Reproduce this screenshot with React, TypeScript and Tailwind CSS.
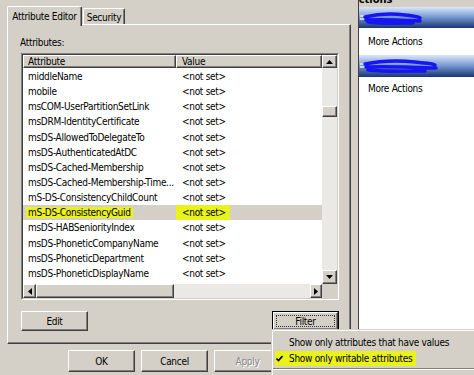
import React from "react";

const font = "font-['DejaVu_Sans_Condensed','Liberation_Sans',sans-serif]";
const raised =
  "border border-t-white border-l-white border-r-[#404040] border-b-[#404040] shadow-[inset_-1px_-1px_0_#808080] bg-[#d4d0c8]";

const rows = [
  "middleName",
  "mobile",
  "msCOM-UserPartitionSetLink",
  "msDRM-IdentityCertificate",
  "msDS-AllowedToDelegateTo",
  "msDS-AuthenticatedAtDC",
  "msDS-Cached-Membership",
  "msDS-Cached-Membership-Time...",
  "mS-DS-ConsistencyChildCount",
  "mS-DS-ConsistencyGuid",
  "msDS-HABSeniorityIndex",
  "msDS-PhoneticCompanyName",
  "msDS-PhoneticDepartment",
  "msDS-PhoneticDisplayName",
  "msDS-PhoneticFirstName",
];

function Arrow({ dir }: { dir: "up" | "down" | "left" | "right" }) {
  const vertical = dir === "up" || dir === "down";
  const points = {
    up: "3.5,0 7,4 0,4",
    down: "0,0 7,0 3.5,4",
    left: "0,3.5 4,0 4,7",
    right: "0,0 4,3.5 0,7",
  }[dir];
  return (
    <svg width={vertical ? 7 : 4} height={vertical ? 4 : 7} viewBox={vertical ? "0 0 7 4" : "0 0 4 7"}>
      <polygon points={points} fill="#000" />
    </svg>
  );
}

function ScrollButton({ dir, className }: { dir: "up" | "down" | "left" | "right"; className: string }) {
  return (
    <div className={`${raised} ${className} flex shrink-0 items-center justify-center`}>
      <Arrow dir={dir} />
    </div>
  );
}

function Scribble({ d }: { d: string }) {
  return (
    <svg className="absolute inset-0" width="115" height="22" viewBox="0 0 115 22">
      <path d="M1,9 H7 M1,12 H7" stroke="#e8eef8" strokeWidth="1.4" />
      <path d={d} stroke="#1616f2" strokeWidth="3.5" strokeLinecap="round" fill="none" />
    </svg>
  );
}

function PanelHeader({ h, d }: { h: string; d: string }) {
  return (
    <div className={`relative ${h} bg-gradient-to-b from-[#dce8f8] via-[#7396d0] to-[#1b3572]`}>
      <Scribble d={d} />
    </div>
  );
}

function DialogButton({ label, disabled }: { label: string; disabled?: boolean }) {
  return (
    <div className={`${raised} flex h-[22px] w-[67px] items-center justify-center`}>
      <span className={disabled ? "text-[#8a8884] [text-shadow:1px_1px_0_#fff]" : "text-black"}>{label}</span>
    </div>
  );
}

export default function App() {
  return (
    <div
      className={`${font} relative flex h-[375px] w-[474px] overflow-hidden whitespace-nowrap bg-[#d4d0c8] text-[10px] leading-[11px] tracking-[-0.3px] text-black`}
    >
      {/* dialog */}
      <div className="relative z-10 flex h-full w-[359px] shrink-0 flex-col border-r border-[#404040] bg-[#d4d0c8] pl-[7px] pt-[6px]">
        {/* tabs */}
        <div className="flex h-[18px] items-end gap-[1px]">
          <div className="relative z-10 -mb-[2px] h-[20px] w-[75px] rounded-t-[2px] border-l border-t border-r border-l-white border-t-white border-r-[#404040] bg-[#d4d0c8] pt-[4px] text-center shadow-[inset_-1px_0_0_#808080]">
            Attribute Editor
          </div>
          <div className="h-[16px] w-[42px] rounded-t-[2px] border-l border-t border-r border-l-white border-t-white border-r-[#404040] pt-[3px] text-center shadow-[inset_-1px_0_0_#808080]">
            Security
          </div>
        </div>

        {/* tab page */}
        <div className="h-[320px] w-[344px] border border-t-white border-l-white border-r-[#404040] border-b-[#404040] pl-[12px] pt-[12px] shadow-[inset_-1px_-1px_0_#808080]">
          <div>Attributes:</div>

          {/* list view */}
          <div className="ml-[1px] mt-[5px] h-[247px] w-[318px] border border-t-[#808080] border-l-[#808080] border-r-white border-b-white">
            <div className="flex h-full w-full flex-col border border-t-[#404040] border-l-[#404040] border-r-[#d4d0c8] border-b-[#d4d0c8] bg-white">
              <div className="flex min-h-0 flex-1">
                <div className="flex min-w-0 flex-1 flex-col">
                  <div className="flex h-[13px] shrink-0">
                    <div className={`${raised} w-[153px] pl-[4px] leading-[11px]`}>Attribute</div>
                    <div className={`${raised} flex-1 pl-[5px] leading-[11px]`}>Value</div>
                  </div>
                  <div className="min-h-0 flex-1 overflow-hidden pt-[1px]">
                    {rows.map((name) => {
                      const hit = name === "mS-DS-ConsistencyGuid";
                      return (
                        <div key={name} className={`flex h-[15.15px] items-center ${hit ? "bg-[#d4d0c8]" : ""}`}>
                          <div className="w-[153px] shrink-0 overflow-hidden pl-[3px]">
                            <span className={`px-[2px] py-[2px] ${hit ? "bg-[#eaf21c]" : ""}`}>{name}</span>
                          </div>
                          <div className="flex-1">
                            <span className={`py-[2px] pl-[6px] pr-[4px] ${hit ? "bg-[#eaf21c]" : ""}`}>&lt;not set&gt;</span>
                          </div>
                        </div>
                      );
                    })}
                  </div>
                </div>
                {/* vertical scrollbar */}
                <div className="flex w-[15px] shrink-0 flex-col bg-[#ebe9e5]">
                  <ScrollButton dir="up" className="h-[13px] w-[15px]" />
                  <div className="flex-1">
                    <div className={`${raised} mt-[38px] h-[11px] w-[15px]`} />
                  </div>
                  <ScrollButton dir="down" className="h-[14px] w-[15px]" />
                </div>
              </div>
              {/* horizontal scrollbar */}
              <div className="flex h-[14px] shrink-0">
                <ScrollButton dir="left" className="h-[14px] w-[13px]" />
                <div className={`${raised} h-[14px] w-[138px]`} />
                <div className="flex-1 bg-[#ebe9e5]" />
                <ScrollButton dir="right" className="h-[14px] w-[12px]" />
                <div className="w-[15px] bg-[#d4d0c8]" />
              </div>
            </div>
          </div>

          <div className="ml-[1px] mt-[11px] flex w-[318px] justify-between">
            <div className={`${raised} flex h-[20px] w-[67px] items-center justify-center`}>Edit</div>
            <div className="flex h-[20px] w-[67px] border border-black">
              <div className="flex flex-1 border border-t-white border-l-white border-r-[#404040] border-b-[#404040] p-[2px] shadow-[inset_-1px_-1px_0_#808080]">
                <div className="flex flex-1 items-center justify-center border border-dotted border-[#303030]">Filter</div>
              </div>
            </div>
          </div>
        </div>

        {/* dialog buttons */}
        <div className="ml-[61px] mt-[6px] flex gap-[6px]">
          <DialogButton label="OK" />
          <DialogButton label="Cancel" />
          <DialogButton label="Apply" disabled />
        </div>
      </div>

      {/* actions pane */}
      <div className="flex min-w-0 flex-1 flex-col bg-white">
        <div className="h-[7px] overflow-hidden bg-[#d4d0c8]">
          <div className="-ml-[8px] -mt-[6px] text-[11px] font-bold leading-[12px] tracking-normal">Actions</div>
        </div>
        <PanelHeader h="h-[21px]" d="M6,10 C18,7 32,6 46,8 S58,9 61,11 M7,13 C22,12 40,13 61,14 M9,15 C25,17 40,16 54,16" />
        <div className="h-[27px] pl-[9px] pt-[8px]">More Actions</div>
        <PanelHeader h="h-[22px]" d="M6,9 C20,6 38,5 56,7 S72,8 76,10 M7,12 C25,11 50,12 77,13 M9,15 C30,17 50,16 66,16" />
        <div className="pl-[9px] pt-[6px]">More Actions</div>
      </div>

      {/* context menu */}
      <div className="absolute left-[272px] top-[330px] z-20 h-[50px] w-[210px] border-l border-t border-white bg-[#d4d0c8] pt-[3px] shadow-[-1px_-1px_0_#d4d0c8]">
        <div className="flex h-[16px] items-center pl-[16px]">Show only attributes that have values</div>
        <div className="flex h-[16px] items-center">
          <span className="ml-[2px] flex items-center gap-[6px] bg-[#eaf21c] py-[2px] pl-[1px] pr-[4px]">
            <svg width="7" height="7" viewBox="0 0 7 7">
              <path d="M0.5,3.5 L2.5,5.5 L6.5,1" stroke="#000" strokeWidth="1.6" fill="none" />
            </svg>
            Show only writable attributes
          </span>
        </div>
        <div className="mt-[2px] border-b border-t border-b-white border-t-[#808080]" />
      </div>
    </div>
  );
}
